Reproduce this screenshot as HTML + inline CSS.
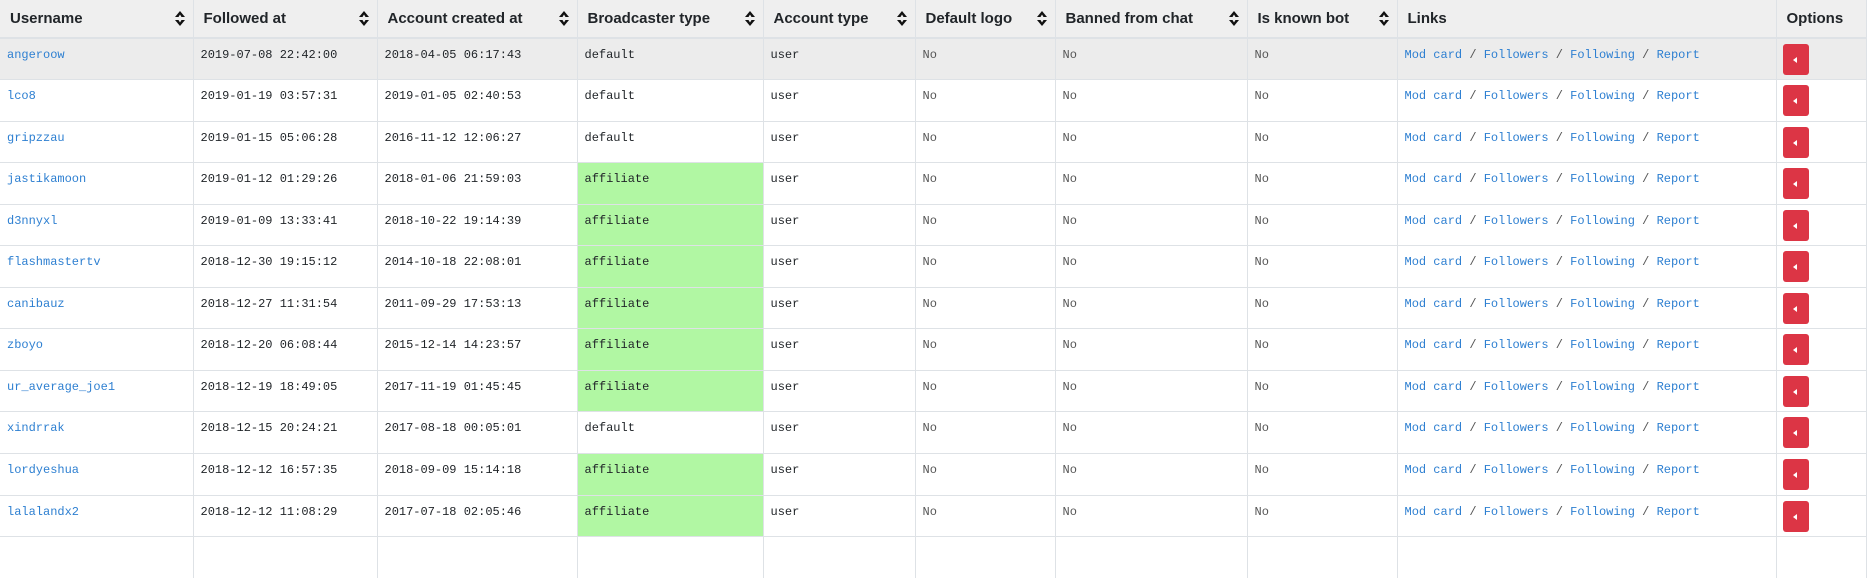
<!DOCTYPE html>
<html><head><meta charset="utf-8"><style>
*{box-sizing:border-box;margin:0;padding:0}
body{width:1870px;height:542px;overflow:hidden;background:#fff;font-family:"Liberation Sans",sans-serif}
table{border-collapse:collapse;table-layout:fixed;width:1866px}
th{height:38px;background:#efefef;font-weight:bold;font-size:15px;color:#212529;text-align:left;padding:0 10px;border-right:1px solid #dee2e6;border-bottom:2px solid #dee2e6;position:relative;vertical-align:middle}
th svg{position:absolute;right:8px;top:11px}
td{height:41.56px;font-family:"Liberation Mono",monospace;font-size:12px;color:#212529;padding:8px 7px 0;vertical-align:top;border-right:1px solid #dee2e6;border-top:1px solid #dee2e6;line-height:16px}
td.u,a{color:#2d7fd1}
td.no{color:#555}
tr.h td{background:#ececec}
td.g{background:#b1f7a3}
.s{color:#555}
.btn{display:block;width:26px;height:31px;background:#dc3545;border-radius:3px;margin-top:-3px;position:relative}
.btn:after{content:"";position:absolute;left:10px;top:13px;border-right:4px solid #fff;border-top:3px solid transparent;border-bottom:3px solid transparent}
td.o{padding-left:6px}
</style></head><body>
<table>
<colgroup><col style="width:193px"><col style="width:184px"><col style="width:200px"><col style="width:186px"><col style="width:152px"><col style="width:140px"><col style="width:192px"><col style="width:150px"><col style="width:379px"><col style="width:90px"></colgroup>
<tr>
<th>Username<svg width="10" height="15" viewBox="0 0 10 15"><path d="M5 0L10 6H0Z M5 15L0 9H10Z" fill="#111"/><path d="M5 3.5L6.5 6H3.5Z M5 11.5L3.5 9H6.5Z" fill="#efefef"/></svg></th>
<th>Followed at<svg width="10" height="15" viewBox="0 0 10 15"><path d="M5 0L10 6H0Z M5 15L0 9H10Z" fill="#111"/><path d="M5 3.5L6.5 6H3.5Z M5 11.5L3.5 9H6.5Z" fill="#efefef"/></svg></th>
<th>Account created at<svg width="10" height="15" viewBox="0 0 10 15"><path d="M5 0L10 6H0Z M5 15L0 9H10Z" fill="#111"/><path d="M5 3.5L6.5 6H3.5Z M5 11.5L3.5 9H6.5Z" fill="#efefef"/></svg></th>
<th>Broadcaster type<svg width="10" height="15" viewBox="0 0 10 15"><path d="M5 0L10 6H0Z M5 15L0 9H10Z" fill="#111"/><path d="M5 3.5L6.5 6H3.5Z M5 11.5L3.5 9H6.5Z" fill="#efefef"/></svg></th>
<th>Account type<svg width="10" height="15" viewBox="0 0 10 15"><path d="M5 0L10 6H0Z M5 15L0 9H10Z" fill="#111"/><path d="M5 3.5L6.5 6H3.5Z M5 11.5L3.5 9H6.5Z" fill="#efefef"/></svg></th>
<th>Default logo<svg width="10" height="15" viewBox="0 0 10 15"><path d="M5 0L10 6H0Z M5 15L0 9H10Z" fill="#111"/><path d="M5 3.5L6.5 6H3.5Z M5 11.5L3.5 9H6.5Z" fill="#efefef"/></svg></th>
<th>Banned from chat<svg width="10" height="15" viewBox="0 0 10 15"><path d="M5 0L10 6H0Z M5 15L0 9H10Z" fill="#111"/><path d="M5 3.5L6.5 6H3.5Z M5 11.5L3.5 9H6.5Z" fill="#efefef"/></svg></th>
<th>Is known bot<svg width="10" height="15" viewBox="0 0 10 15"><path d="M5 0L10 6H0Z M5 15L0 9H10Z" fill="#111"/><path d="M5 3.5L6.5 6H3.5Z M5 11.5L3.5 9H6.5Z" fill="#efefef"/></svg></th>
<th>Links</th>
<th>Options</th>
</tr>
<tr class="h"><td class="u">angeroow</td><td>2019-07-08 22:42:00</td><td>2018-04-05 06:17:43</td><td>default</td><td>user</td><td class="no">No</td><td class="no">No</td><td class="no">No</td><td><a>Mod card</a> <span class="s">/</span> <a>Followers</a> <span class="s">/</span> <a>Following</a> <span class="s">/</span> <a>Report</a></td><td class="o"><span class="btn"></span></td></tr>
<tr><td class="u">lco8</td><td>2019-01-19 03:57:31</td><td>2019-01-05 02:40:53</td><td>default</td><td>user</td><td class="no">No</td><td class="no">No</td><td class="no">No</td><td><a>Mod card</a> <span class="s">/</span> <a>Followers</a> <span class="s">/</span> <a>Following</a> <span class="s">/</span> <a>Report</a></td><td class="o"><span class="btn"></span></td></tr>
<tr><td class="u">gripzzau</td><td>2019-01-15 05:06:28</td><td>2016-11-12 12:06:27</td><td>default</td><td>user</td><td class="no">No</td><td class="no">No</td><td class="no">No</td><td><a>Mod card</a> <span class="s">/</span> <a>Followers</a> <span class="s">/</span> <a>Following</a> <span class="s">/</span> <a>Report</a></td><td class="o"><span class="btn"></span></td></tr>
<tr><td class="u">jastikamoon</td><td>2019-01-12 01:29:26</td><td>2018-01-06 21:59:03</td><td class="g">affiliate</td><td>user</td><td class="no">No</td><td class="no">No</td><td class="no">No</td><td><a>Mod card</a> <span class="s">/</span> <a>Followers</a> <span class="s">/</span> <a>Following</a> <span class="s">/</span> <a>Report</a></td><td class="o"><span class="btn"></span></td></tr>
<tr><td class="u">d3nnyxl</td><td>2019-01-09 13:33:41</td><td>2018-10-22 19:14:39</td><td class="g">affiliate</td><td>user</td><td class="no">No</td><td class="no">No</td><td class="no">No</td><td><a>Mod card</a> <span class="s">/</span> <a>Followers</a> <span class="s">/</span> <a>Following</a> <span class="s">/</span> <a>Report</a></td><td class="o"><span class="btn"></span></td></tr>
<tr><td class="u">flashmastertv</td><td>2018-12-30 19:15:12</td><td>2014-10-18 22:08:01</td><td class="g">affiliate</td><td>user</td><td class="no">No</td><td class="no">No</td><td class="no">No</td><td><a>Mod card</a> <span class="s">/</span> <a>Followers</a> <span class="s">/</span> <a>Following</a> <span class="s">/</span> <a>Report</a></td><td class="o"><span class="btn"></span></td></tr>
<tr><td class="u">canibauz</td><td>2018-12-27 11:31:54</td><td>2011-09-29 17:53:13</td><td class="g">affiliate</td><td>user</td><td class="no">No</td><td class="no">No</td><td class="no">No</td><td><a>Mod card</a> <span class="s">/</span> <a>Followers</a> <span class="s">/</span> <a>Following</a> <span class="s">/</span> <a>Report</a></td><td class="o"><span class="btn"></span></td></tr>
<tr><td class="u">zboyo</td><td>2018-12-20 06:08:44</td><td>2015-12-14 14:23:57</td><td class="g">affiliate</td><td>user</td><td class="no">No</td><td class="no">No</td><td class="no">No</td><td><a>Mod card</a> <span class="s">/</span> <a>Followers</a> <span class="s">/</span> <a>Following</a> <span class="s">/</span> <a>Report</a></td><td class="o"><span class="btn"></span></td></tr>
<tr><td class="u">ur_average_joe1</td><td>2018-12-19 18:49:05</td><td>2017-11-19 01:45:45</td><td class="g">affiliate</td><td>user</td><td class="no">No</td><td class="no">No</td><td class="no">No</td><td><a>Mod card</a> <span class="s">/</span> <a>Followers</a> <span class="s">/</span> <a>Following</a> <span class="s">/</span> <a>Report</a></td><td class="o"><span class="btn"></span></td></tr>
<tr><td class="u">xindrrak</td><td>2018-12-15 20:24:21</td><td>2017-08-18 00:05:01</td><td>default</td><td>user</td><td class="no">No</td><td class="no">No</td><td class="no">No</td><td><a>Mod card</a> <span class="s">/</span> <a>Followers</a> <span class="s">/</span> <a>Following</a> <span class="s">/</span> <a>Report</a></td><td class="o"><span class="btn"></span></td></tr>
<tr><td class="u">lordyeshua</td><td>2018-12-12 16:57:35</td><td>2018-09-09 15:14:18</td><td class="g">affiliate</td><td>user</td><td class="no">No</td><td class="no">No</td><td class="no">No</td><td><a>Mod card</a> <span class="s">/</span> <a>Followers</a> <span class="s">/</span> <a>Following</a> <span class="s">/</span> <a>Report</a></td><td class="o"><span class="btn"></span></td></tr>
<tr><td class="u">lalalandx2</td><td>2018-12-12 11:08:29</td><td>2017-07-18 02:05:46</td><td class="g">affiliate</td><td>user</td><td class="no">No</td><td class="no">No</td><td class="no">No</td><td><a>Mod card</a> <span class="s">/</span> <a>Followers</a> <span class="s">/</span> <a>Following</a> <span class="s">/</span> <a>Report</a></td><td class="o"><span class="btn"></span></td></tr>
<tr><td></td><td></td><td></td><td></td><td></td><td></td><td></td><td></td><td></td><td></td></tr>
</table>
</body></html>
